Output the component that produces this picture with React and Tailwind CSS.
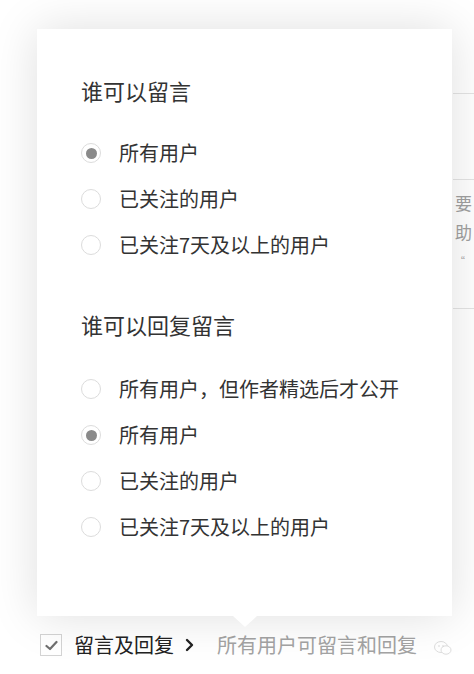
import React from 'react';

const commentOptions = [
  { label: '所有用户', checked: true },
  { label: '已关注的用户', checked: false },
  { label: '已关注7天及以上的用户', checked: false },
];

const replyOptions = [
  { label: '所有用户，但作者精选后才公开', checked: false },
  { label: '所有用户', checked: true },
  { label: '已关注的用户', checked: false },
  { label: '已关注7天及以上的用户', checked: false },
];

function Radio({ checked }) {
  return (
    <span className="flex h-[20px] w-[20px] shrink-0 items-center justify-center rounded-full border border-[#dcdcdc] bg-white">
      {checked && <span className="h-[11px] w-[11px] rounded-full bg-[#8a8a8a]" />}
    </span>
  );
}

function OptionList({ options }) {
  return (
    <div className="flex flex-col">
      {options.map((opt, i) => (
        <div key={i} className="flex h-[46px] items-center gap-[18px]">
          <Radio checked={opt.checked} />
          <span className="text-[20px] leading-none text-[#333]">{opt.label}</span>
        </div>
      ))}
    </div>
  );
}

export default function App() {
  return (
    <div
      className="relative h-[674px] w-[474px] overflow-hidden bg-white"
      style={{ fontFamily: '"Noto Sans CJK SC", "Noto Sans", sans-serif' }}
    >
      {/* page content behind the popup */}
      <div className="ml-[453px] pt-[93px] text-[17px] text-[#a0a0a0]">
        <div className="h-[86px] border-t border-[#e4e4e4]" />
        <div className="h-[129px] border-t border-[#e4e4e4] pl-[2px] pt-[8px] leading-[29px]">
          <div>要</div>
          <div>助</div>
          <div className="text-[10px]">“</div>
        </div>
        <div className="border-t border-[#e4e4e4]" />
      </div>

      {/* bottom setting row */}
      <div className="absolute left-[40px] top-[634px] flex h-[22px] items-center">
        <span className="flex h-[22px] w-[22px] items-center justify-center border border-[#d4d4d4] bg-white">
          <svg width="13" height="11" viewBox="0 0 13 11" fill="none">
            <path d="M1.5 6 L5 9 L11.5 2" stroke="#6f6f6f" strokeWidth="2.2" strokeLinecap="round" strokeLinejoin="round" />
          </svg>
        </span>
        <span className="ml-[12px] text-[20px] leading-none text-[#222]">留言及回复</span>
        <svg className="ml-[11px]" width="9" height="14" viewBox="0 0 9 14" fill="none">
          <path d="M2 2 L7 7 L2 12" stroke="#222" strokeWidth="2.4" strokeLinecap="round" strokeLinejoin="round" />
        </svg>
        <span className="ml-[23px] text-[20px] leading-none text-[#a3a3a3]">所有用户可留言和回复</span>
      </div>

      {/* faint watermark */}
      <svg className="absolute left-[433px] top-[640px]" width="20" height="16" viewBox="0 0 20 16" fill="none">
        <ellipse cx="8" cy="7" rx="6.5" ry="5.5" stroke="#dedede" strokeWidth="1" />
        <ellipse cx="13" cy="10" rx="5" ry="4.2" stroke="#dedede" strokeWidth="1" fill="white" />
        <circle cx="6" cy="6" r="0.8" fill="#d6d6d6" />
        <circle cx="10" cy="6" r="0.8" fill="#d6d6d6" />
      </svg>

      {/* popup */}
      <div className="absolute left-[37px] top-[29px] h-[587px] w-[415px] bg-white px-[44px] pt-[44px] shadow-[0_0_45px_rgba(0,0,0,0.13)]">
        <div className="h-[34px] text-[22px] leading-[34px] text-[#333]">谁可以留言</div>
        <div className="mt-[23px]">
          <OptionList options={commentOptions} />
        </div>
        <div className="mt-[39px] h-[34px] text-[22px] leading-[34px] text-[#333]">谁可以回复留言</div>
        <div className="mt-[25px]">
          <OptionList options={replyOptions} />
        </div>
        <span className="absolute left-[196px] top-full h-0 w-0 border-x-[12px] border-t-[11px] border-x-transparent border-t-white" />
      </div>
    </div>
  );
}
